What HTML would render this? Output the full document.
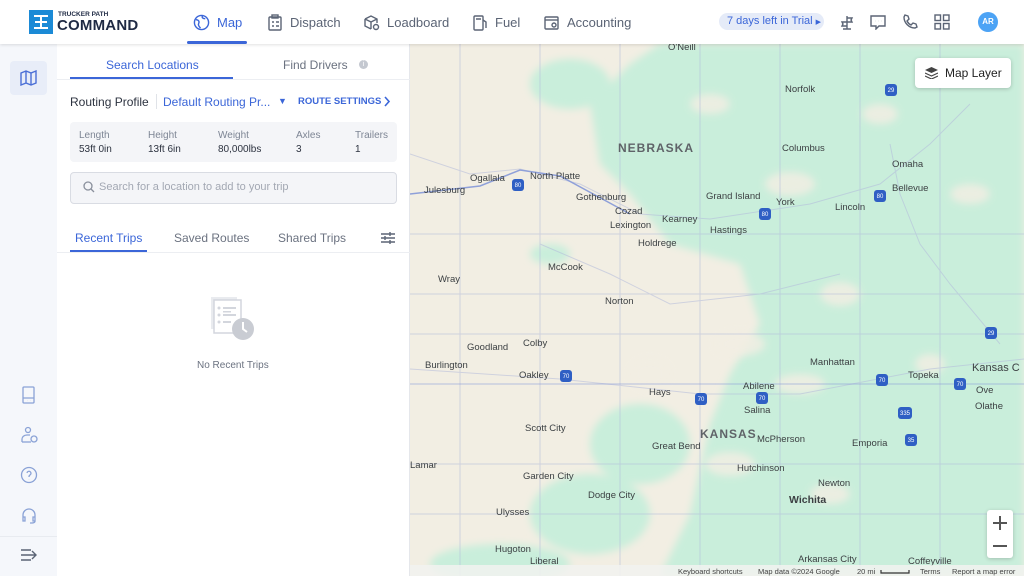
<!DOCTYPE html>
<html><head><meta charset="utf-8"><style>
*{margin:0;padding:0;box-sizing:border-box}
body{width:1024px;height:576px;overflow:hidden;font-family:"Liberation Sans",sans-serif;background:#fff;position:relative}
.top{position:absolute;left:0;top:0;width:1024px;height:44px;background:#fff;box-shadow:0 1px 3px rgba(0,0,0,.12);z-index:5}
.nav{position:absolute;top:0;height:44px;display:flex;align-items:center;font-size:13px;color:#5b6475}
.nav svg{margin-right:7px}
.side{position:absolute;left:0;top:44px;width:57px;height:532px;background:#f5f7fb}
.panel{position:absolute;left:57px;top:44px;width:353px;height:532px;background:#fff;border-right:1px solid #e5e7eb}
.t{position:absolute;white-space:nowrap}
.map{position:absolute;left:410px;top:44px;width:614px;height:532px;overflow:hidden}
.lbl{font-size:9.5px;fill:#3c4043;font-family:"Liberation Sans",sans-serif}
</style></head><body>
<div class="top">
  <div style="position:absolute;left:29px;top:10px;width:24px;height:24px;background:#1b8ad6"></div>
  <svg style="position:absolute;left:31px;top:12px" width="20" height="20" viewBox="0 0 20 20" fill="none" stroke="#fff" stroke-width="2"><path d="M3 4h14M3 16h14M10 4v12M4 10h12"/></svg>
  <div class="t" style="left:58px;top:11px;font-size:6.5px;font-weight:bold;color:#1f2a44">TRUCKER PATH</div>
  <div class="t" style="left:57px;top:17px;font-size:15px;font-weight:bold;color:#1f2a44;letter-spacing:.2px">COMMAND</div>
  <div class="nav" style="left:193px;color:#3b66d8;font-weight:500"><svg width="17" height="17" viewBox="0 0 18 18" fill="none" stroke="#3b66d8" stroke-width="1.5"><circle cx="9" cy="9" r="7.5"/><path d="M3 6c3 0 4 2 3 4s1 4 2 5M10 2c-1 2 1 3 3 3"/></svg>Map</div>
  <div style="position:absolute;left:187px;top:41px;width:60px;height:3px;background:#3b66d8;border-radius:2px"></div>
  <div class="nav" style="left:267px"><svg width="16" height="17" viewBox="0 0 16 17" fill="none" stroke="#5b6475" stroke-width="1.4"><rect x="2" y="3" width="12" height="13" rx="1"/><rect x="5" y="1" width="6" height="3"/><path d="M5 8h2M9 8h3M5 12h2M9 12h3"/></svg>Dispatch</div>
  <div class="nav" style="left:363px"><svg width="17" height="17" viewBox="0 0 17 17" fill="none" stroke="#5b6475" stroke-width="1.4"><path d="M2 5l6-3 6 3v4M2 5v7l6 3M2 5l6 3 6-3M8 8v7"/><circle cx="13" cy="13" r="2.5"/></svg>Loadboard</div>
  <div class="nav" style="left:472px"><svg width="16" height="17" viewBox="0 0 16 17" fill="none" stroke="#5b6475" stroke-width="1.4"><rect x="2" y="2" width="9" height="14" rx="1"/><path d="M4 5h5M11 6l3 2v6"/></svg>Fuel</div>
  <div class="nav" style="left:543px"><svg width="17" height="17" viewBox="0 0 17 17" fill="none" stroke="#5b6475" stroke-width="1.4"><rect x="2" y="3" width="13" height="12" rx="1"/><path d="M2 6h13"/><circle cx="11" cy="11" r="2"/></svg>Accounting</div>
  <div class="t" style="left:719px;top:13px;width:105px;height:17px;background:#e5ebf8;border-radius:9px;font-size:11px;color:#3b66d8;line-height:17px;padding-left:8px">7 days left in Trial <span style="font-size:7px">▶</span></div>
  <svg style="position:absolute;left:839px;top:14px" width="16" height="16" viewBox="0 0 16 16" fill="none" stroke="#5b6475" stroke-width="1.4"><path d="M8 2v13M4 15h8M8 4h5l-1 2 1 2H8M8 8H3l1 2-1 2h5"/></svg>
  <svg style="position:absolute;left:870px;top:14px" width="16" height="16" viewBox="0 0 16 16" fill="none" stroke="#5b6475" stroke-width="1.4"><path d="M1 2h14v10H9l-3 3v-3H1z"/><path d="M5 7h.1M8 7h.1M11 7h.1"/></svg>
  <svg style="position:absolute;left:902px;top:14px" width="16" height="16" viewBox="0 0 16 16" fill="none" stroke="#5b6475" stroke-width="1.4"><path d="M3 1l3 1 1 3-2 2c1 2 2 3 4 4l2-2 3 1 1 3-2 1C7 14 2 9 2 3z"/></svg>
  <svg style="position:absolute;left:934px;top:14px" width="16" height="16" viewBox="0 0 16 16" fill="none" stroke="#5b6475" stroke-width="1.4"><rect x="1" y="1" width="5.5" height="5.5"/><rect x="9.5" y="1" width="5.5" height="5.5"/><rect x="1" y="9.5" width="5.5" height="5.5"/><rect x="9.5" y="9.5" width="5.5" height="5.5"/></svg>
  <div class="t" style="left:978px;top:12px;width:20px;height:20px;border-radius:50%;background:#4ca3f5;color:#fff;font-size:8px;font-weight:bold;text-align:center;line-height:20px">AR</div>
</div>

<div class="side">
  <div style="position:absolute;left:10px;top:17px;width:37px;height:34px;background:#e8edf8;border-radius:4px"></div>
  <svg style="position:absolute;left:20px;top:26px" width="17" height="16" viewBox="0 0 17 16" fill="none" stroke="#4b6fd6" stroke-width="1.4"><path d="M1 3l5-2 5 2 5-2v12l-5 2-5-2-5 2zM6 1v12M11 3v12"/></svg>
  <svg style="position:absolute;left:21px;top:342px" width="15" height="18" viewBox="0 0 15 18" fill="none" stroke="#8aa2d6" stroke-width="1.3"><rect x="2" y="1" width="11" height="16" rx="1"/><path d="M2 12h11M6 14.5h.1M9 14.5h.1"/></svg>
  <svg style="position:absolute;left:20px;top:382px" width="18" height="18" viewBox="0 0 18 18" fill="none" stroke="#8aa2d6" stroke-width="1.3"><circle cx="8" cy="4" r="2.5"/><path d="M2 16v-3c0-2 2-4 5-4h3"/><path d="M2 16h9"/><circle cx="14" cy="13" r="3"/></svg>
  <svg style="position:absolute;left:20px;top:422px" width="18" height="18" viewBox="0 0 18 18" fill="none" stroke="#8aa2d6" stroke-width="1.3"><circle cx="9" cy="9" r="7.5"/><path d="M7 7a2 2 0 1 1 3 2c-1 .5-1 1-1 2M9 13v.1"/></svg>
  <svg style="position:absolute;left:20px;top:462px" width="18" height="18" viewBox="0 0 18 18" fill="none" stroke="#8aa2d6" stroke-width="1.3"><path d="M3 11V9a6 6 0 0 1 12 0v2M3 11h2v4H3zM13 11h2v4h-2zM15 15c0 2-2 2-5 2"/></svg>
  <div style="position:absolute;left:0;top:492px;width:57px;height:1px;background:#e8ebf0"></div>
  <svg style="position:absolute;left:20px;top:504px" width="18" height="14" viewBox="0 0 18 14" fill="none" stroke="#5b6475" stroke-width="1.4"><path d="M1 2h10M1 7h14M1 12h10M12 3l4 4-4 4"/></svg>
</div>

<div class="panel">
  <div class="t" style="left:49px;top:14px;font-size:12px;color:#3b66d8">Search Locations</div>
  <div style="position:absolute;left:13px;top:33px;width:163px;height:2px;background:#3b66d8"></div>
  <div class="t" style="left:226px;top:14px;font-size:12px;color:#6b7280">Find Drivers</div>
  <div class="t" style="left:302px;top:16px;width:9px;height:9px;border-radius:50%;background:#c4c8d0;color:#fff;font-size:7px;text-align:center;line-height:9px">i</div>
  <div style="position:absolute;left:0;top:35px;width:353px;height:1px;background:#eceef2"></div>
  <div class="t" style="left:13px;top:51px;font-size:12px;color:#2d3340">Routing Profile</div>
  <div style="position:absolute;left:99px;top:50px;width:1px;height:15px;background:#e0e3e8"></div>
  <div class="t" style="left:106px;top:51px;font-size:12px;color:#3b66d8">Default Routing Pr...</div>
  <div class="t" style="left:221px;top:52px;font-size:9px;color:#3b66d8">▼</div>
  <div class="t" style="left:241px;top:52px;font-size:9.5px;font-weight:bold;color:#3b66d8">ROUTE SETTINGS</div>
  <svg style="position:absolute;left:326px;top:52px" width="8" height="11" viewBox="0 0 8 11" fill="none" stroke="#3b66d8" stroke-width="1.6"><path d="M2 1l4 4.5L2 10"/></svg>
  <div style="position:absolute;left:13px;top:78px;width:327px;height:40px;background:#f4f5f8;border-radius:4px"></div>
  <div class="t" style="left:22px;top:85px;font-size:10px;color:#7d8594;line-height:14px">Length<br><span style="color:#2d3340">53ft 0in</span></div>
  <div class="t" style="left:91px;top:85px;font-size:10px;color:#7d8594;line-height:14px">Height<br><span style="color:#2d3340">13ft 6in</span></div>
  <div class="t" style="left:161px;top:85px;font-size:10px;color:#7d8594;line-height:14px">Weight<br><span style="color:#2d3340">80,000lbs</span></div>
  <div class="t" style="left:239px;top:85px;font-size:10px;color:#7d8594;line-height:14px">Axles<br><span style="color:#2d3340">3</span></div>
  <div class="t" style="left:298px;top:85px;font-size:10px;color:#7d8594;line-height:14px">Trailers<br><span style="color:#2d3340">1</span></div>
  <div style="position:absolute;left:13px;top:128px;width:327px;height:32px;background:#f4f5f8;border:1px solid #d9dce3;border-radius:4px"></div>
  <svg style="position:absolute;left:26px;top:137px" width="12" height="12" viewBox="0 0 12 12" fill="none" stroke="#8a909c" stroke-width="1.3"><circle cx="5" cy="5" r="4"/><path d="M8 8l3 3"/></svg>
  <div class="t" style="left:42px;top:137px;font-size:11px;color:#a3a8b3">Search for a location to add to your trip</div>
  <div class="t" style="left:18px;top:187px;font-size:12px;color:#3b66d8">Recent Trips</div>
  <div style="position:absolute;left:13px;top:206px;width:77px;height:2px;background:#3b66d8"></div>
  <div class="t" style="left:117px;top:187px;font-size:12px;color:#6b7280">Saved Routes</div>
  <div class="t" style="left:221px;top:187px;font-size:12px;color:#6b7280">Shared Trips</div>
  <svg style="position:absolute;left:323px;top:187px" width="16" height="14" viewBox="0 0 16 14" fill="none" stroke="#5b6475" stroke-width="1.4"><path d="M1 3h14M1 7h14M1 11h14M10 1v4M5 5v4M10 9v4"/></svg>
  <div style="position:absolute;left:0;top:208px;width:353px;height:1px;background:#eceef2"></div>
  <svg style="position:absolute;left:152px;top:252px" width="48" height="50" viewBox="0 0 48 50" fill="none"><rect x="2" y="1" width="26" height="32" fill="#e9ebef"/><rect x="5" y="4" width="27" height="33" fill="#fff" stroke="#d3d6dd" stroke-width="1.5"/><g fill="#d3d6dd"><circle cx="10" cy="12" r="1.5"/><circle cx="10" cy="19" r="1.5"/><circle cx="10" cy="26" r="1.5"/><rect x="14" y="11" width="13" height="2"/><rect x="14" y="15" width="8" height="1.5"/><rect x="14" y="18" width="13" height="2"/><rect x="14" y="25" width="8" height="2"/></g><circle cx="34" cy="33" r="11" fill="#c9ccd3"/><path d="M34 26v7l4 3" stroke="#fff" stroke-width="2"/></svg>
  <div class="t" style="left:140px;top:316px;font-size:10px;color:#6b7280">No Recent Trips</div>
</div>

<div class="map">
<svg width="614" height="532" viewBox="0 0 614 532">
  <defs><filter id="b"><feGaussianBlur stdDeviation="4"/></filter></defs>
  <rect width="614" height="532" fill="#f2eee3"/>
  <g fill="#c9eedb" filter="url(#b)">
    <path d="M250 0H614V532H250L280 470 300 380 320 330 350 280 330 220 260 200 220 150 190 120 180 60 220 20z"/>
    <ellipse cx="160" cy="40" rx="40" ry="25"/>
    <ellipse cx="230" cy="400" rx="50" ry="40"/>
    <ellipse cx="180" cy="470" rx="60" ry="40"/>
    <ellipse cx="90" cy="520" rx="70" ry="20"/>
    <ellipse cx="140" cy="210" rx="20" ry="10"/>
  </g>
  <g fill="#f2eee3" filter="url(#b)" opacity=".85">
    <ellipse cx="300" cy="60" rx="20" ry="10"/><ellipse cx="380" cy="140" rx="25" ry="12"/><ellipse cx="470" cy="70" rx="18" ry="10"/>
    <ellipse cx="330" cy="300" rx="25" ry="12"/><ellipse cx="430" cy="250" rx="20" ry="12"/><ellipse cx="390" cy="340" rx="25" ry="10"/>
    <ellipse cx="320" cy="420" rx="25" ry="12"/><ellipse cx="420" cy="450" rx="20" ry="10"/><ellipse cx="520" cy="320" rx="15" ry="10"/>
    <ellipse cx="560" cy="150" rx="20" ry="10"/><ellipse cx="240" cy="330" rx="20" ry="15"/>
  </g>
  <g stroke="#b3bbdb" stroke-width="1" fill="none" opacity=".55">
    <path d="M0 110L60 130 110 125 170 140 230 170 300 175 400 160 470 140 520 100 560 60"/>
    <path d="M0 325L150 335 290 350 390 350 520 325 614 315"/>
    <path d="M0 190H614M0 250H614M0 290H614M0 420H614M0 470H614"/>
    <path d="M50 0V532M130 0V532M210 0V532M290 0V532M370 0V532M450 0V532M530 0V532"/>
    <path d="M480 100L490 150 510 200 540 240 590 300"/>
    <path d="M130 200L200 230 260 260 350 250 430 230"/>
  </g>
  <path d="M0 150 L70 142 110 126 150 132 220 170" stroke="#8fa0d9" stroke-width="1.5" fill="none"/>
  <path d="M0 340H614" stroke="#8fa0d9" stroke-width="1.3" fill="none" opacity=".5"/>
  <text class="lbl" x="208" y="108" style="font-size:12px;font-weight:bold;letter-spacing:1px;fill:#5f6368">NEBRASKA</text>
  <text class="lbl" x="290" y="394" style="font-size:12px;font-weight:bold;letter-spacing:1px;fill:#5f6368">KANSAS</text>
  <text class="lbl" x="258" y="6">O'Neill</text>
  <text class="lbl" x="375" y="48">Norfolk</text>
  <text class="lbl" x="372" y="107">Columbus</text>
  <text class="lbl" x="482" y="123">Omaha</text>
  <text class="lbl" x="482" y="147">Bellevue</text>
  <text class="lbl" x="60" y="137">Ogallala</text>
  <text class="lbl" x="120" y="135">North Platte</text>
  <text class="lbl" x="14" y="149">Julesburg</text>
  <text class="lbl" x="166" y="156">Gothenburg</text>
  <text class="lbl" x="205" y="170">Cozad</text>
  <text class="lbl" x="200" y="184">Lexington</text>
  <text class="lbl" x="296" y="155">Grand Island</text>
  <text class="lbl" x="366" y="161">York</text>
  <text class="lbl" x="252" y="178">Kearney</text>
  <text class="lbl" x="300" y="189">Hastings</text>
  <text class="lbl" x="425" y="166">Lincoln</text>
  <text class="lbl" x="228" y="202">Holdrege</text>
  <text class="lbl" x="138" y="226">McCook</text>
  <text class="lbl" x="28" y="238">Wray</text>
  <text class="lbl" x="195" y="260">Norton</text>
  <text class="lbl" x="57" y="306">Goodland</text>
  <text class="lbl" x="113" y="302">Colby</text>
  <text class="lbl" x="15" y="324">Burlington</text>
  <text class="lbl" x="109" y="334">Oakley</text>
  <text class="lbl" x="239" y="351">Hays</text>
  <text class="lbl" x="400" y="321">Manhattan</text>
  <text class="lbl" x="498" y="334">Topeka</text>
  <text class="lbl" x="562" y="327" style="font-size:11px">Kansas C</text>
  <text class="lbl" x="566" y="349">Ove</text>
  <text class="lbl" x="565" y="365">Olathe</text>
  <text class="lbl" x="333" y="345">Abilene</text>
  <text class="lbl" x="334" y="369">Salina</text>
  <text class="lbl" x="115" y="387">Scott City</text>
  <text class="lbl" x="347" y="398">McPherson</text>
  <text class="lbl" x="442" y="402">Emporia</text>
  <text class="lbl" x="242" y="405">Great Bend</text>
  <text class="lbl" x="0" y="424">Lamar</text>
  <text class="lbl" x="327" y="427">Hutchinson</text>
  <text class="lbl" x="113" y="435">Garden City</text>
  <text class="lbl" x="408" y="442">Newton</text>
  <text class="lbl" x="178" y="454">Dodge City</text>
  <text class="lbl" x="379" y="459" style="font-weight:bold;font-size:10.5px">Wichita</text>
  <text class="lbl" x="86" y="471">Ulysses</text>
  <text class="lbl" x="85" y="508">Hugoton</text>
  <text class="lbl" x="120" y="520">Liberal</text>
  <text class="lbl" x="388" y="518">Arkansas City</text>
  <text class="lbl" x="498" y="520">Coffeyville</text>
  <g font-size="6" font-family="Liberation Sans" fill="#fff" text-anchor="middle">
    <g transform="translate(108,141)"><rect x="-6" y="-6" width="12" height="12" rx="3" fill="#2f5fc4"/><text y="2">80</text></g>
    <g transform="translate(355,170)"><rect x="-6" y="-6" width="12" height="12" rx="3" fill="#2f5fc4"/><text y="2">80</text></g>
    <g transform="translate(470,152)"><rect x="-6" y="-6" width="12" height="12" rx="3" fill="#2f5fc4"/><text y="2">80</text></g>
    <g transform="translate(481,46)"><rect x="-6" y="-6" width="12" height="12" rx="3" fill="#2f5fc4"/><text y="2">29</text></g>
    <g transform="translate(581,289)"><rect x="-6" y="-6" width="12" height="12" rx="3" fill="#2f5fc4"/><text y="2">29</text></g>
    <g transform="translate(156,332)"><rect x="-6" y="-6" width="12" height="12" rx="3" fill="#2f5fc4"/><text y="2">70</text></g>
    <g transform="translate(291,355)"><rect x="-6" y="-6" width="12" height="12" rx="3" fill="#2f5fc4"/><text y="2">70</text></g>
    <g transform="translate(352,354)"><rect x="-6" y="-6" width="12" height="12" rx="3" fill="#2f5fc4"/><text y="2">70</text></g>
    <g transform="translate(472,336)"><rect x="-6" y="-6" width="12" height="12" rx="3" fill="#2f5fc4"/><text y="2">70</text></g>
    <g transform="translate(550,340)"><rect x="-6" y="-6" width="12" height="12" rx="3" fill="#2f5fc4"/><text y="2">70</text></g>
    <g transform="translate(495,369)"><rect x="-7" y="-6" width="14" height="12" rx="3" fill="#2f5fc4"/><text y="2">335</text></g>
    <g transform="translate(501,396)"><rect x="-6" y="-6" width="12" height="12" rx="3" fill="#2f5fc4"/><text y="2">35</text></g>
  </g>
  <rect x="0" y="521" width="614" height="11" fill="#f2f2f0" opacity=".85"/>
  <text x="268" y="530" font-size="7.5" fill="#444" font-family="Liberation Sans">Keyboard shortcuts</text>
  <text x="348" y="530" font-size="7.5" fill="#444" font-family="Liberation Sans">Map data ©2024 Google</text>
  <text x="447" y="530" font-size="7.5" fill="#444" font-family="Liberation Sans">20 mi</text>
  <path d="M471 526v3h28v-3" stroke="#333" stroke-width="1.2" fill="none"/>
  <text x="510" y="530" font-size="7.5" fill="#444" font-family="Liberation Sans">Terms</text>
  <text x="542" y="530" font-size="7.5" fill="#444" font-family="Liberation Sans">Report a map error</text>
</svg>
<div style="position:absolute;left:505px;top:14px;width:96px;height:30px;background:#fff;border-radius:4px;box-shadow:0 1px 4px rgba(0,0,0,.2);font-size:12px;color:#222;line-height:30px;padding-left:30px">Map Layer</div>
<svg style="position:absolute;left:515px;top:23px" width="13" height="12" viewBox="0 0 13 12"><path d="M6.5 0L13 3 6.5 6 0 3z" fill="#444"/><path d="M0 6l6.5 3L13 6M0 9l6.5 3L13 9" stroke="#444" stroke-width="1.2" fill="none"/></svg>
<div style="position:absolute;left:577px;top:466px;width:26px;height:48px;background:#fff;border-radius:3px;box-shadow:0 1px 4px rgba(0,0,0,.2)"></div>
<div style="position:absolute;left:583px;top:478px;width:14px;height:2px;background:#555"></div>
<div style="position:absolute;left:589px;top:472px;width:2px;height:14px;background:#555"></div>
<div style="position:absolute;left:583px;top:501px;width:14px;height:2px;background:#555"></div>
</div>
</body></html>
